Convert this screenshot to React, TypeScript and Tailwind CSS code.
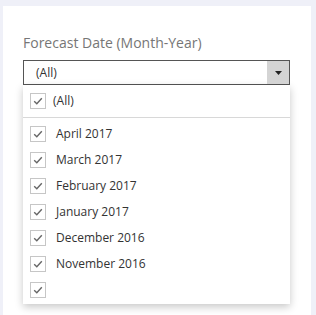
import React from "react";

const items = ["April 2017", "March 2017", "February 2017", "January 2017", "December 2016", "November 2016", ""];

function Check() {
  return (
    <div className="w-[16px] h-[16px] border border-[#c6c6c6] bg-white flex items-center justify-center shrink-0">
      <svg width="12" height="12" viewBox="0 0 12 12">
        <path d="M2.2 6.3 L4.8 8.8 L9.8 3.3" fill="none" stroke="#666" strokeWidth="1.4" />
      </svg>
    </div>
  );
}

export default function App() {
  return (
    <div className="w-[316px] h-[315px] bg-[#eff0f8] overflow-hidden" style={{ fontFamily: '"Open Sans", "Noto Sans", sans-serif' }}>
      <div className="ml-[3px] mt-[6px] w-[308px] h-[309px] bg-white pl-[20px] pt-[27px]">
        <div className="text-[14px] leading-[20px] text-[#767676] h-[27px]">Forecast Date (Month-Year)</div>
        <div className="w-[267px] h-[25px] border border-[#555] flex items-center">
          <div className="flex-1 pl-[12px] text-[12px] text-[#333]">(All)</div>
          <div className="w-[22px] h-[23px] bg-[#d4d4d4] flex items-center justify-center">
            <svg width="7" height="4" viewBox="0 0 7 4"><path d="M0 0 L7 0 L3.5 4 Z" fill="#222" /></svg>
          </div>
        </div>
        <div className="w-[267px] bg-white shadow-[0_3px_8px_rgba(0,0,0,0.22)] pb-[1px]">
          <div className="h-[32px] flex items-center gap-[7px] pl-[7px]">
            <Check />
            <span className="text-[12px] text-[#333]">(All)</span>
          </div>
          <div className="h-px bg-[#d8d8d8]" />
          <div className="pt-[3px] pl-[7px]">
            {items.map((t, i) => (
              <div key={i} className="h-[26px] flex items-center gap-[10px]">
                <Check />
                <span className="text-[12px] text-[#333]">{t}</span>
              </div>
            ))}
          </div>
        </div>
      </div>
    </div>
  );
}
